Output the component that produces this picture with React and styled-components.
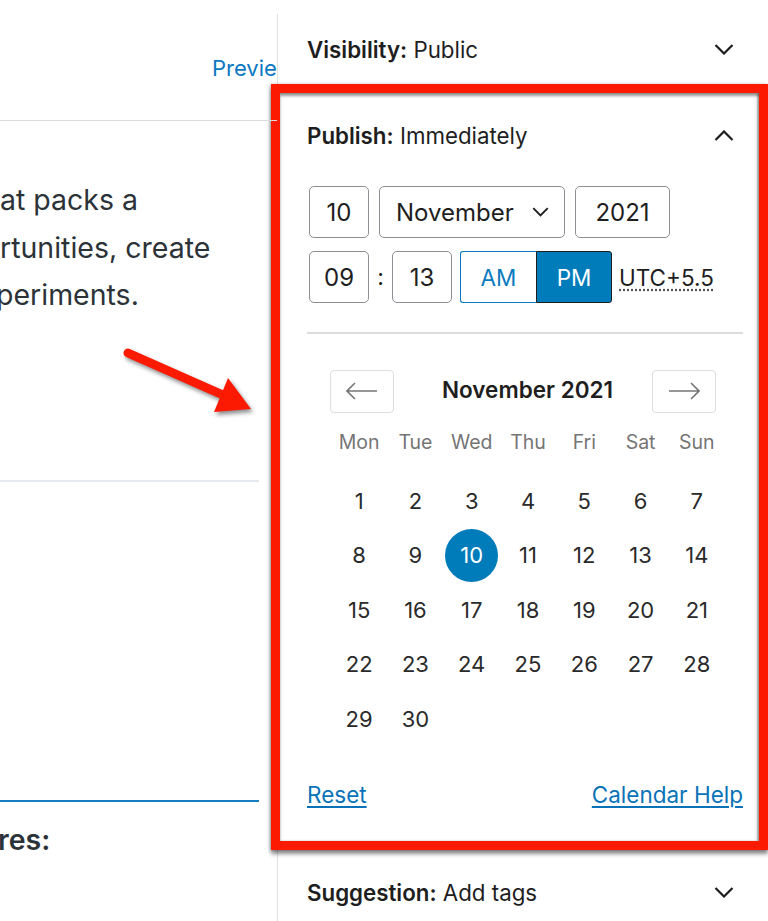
import React from "react";
import styled, { createGlobalStyle } from "styled-components";

const GlobalStyle = createGlobalStyle`
  html, body {
    margin: 0;
    padding: 0;
    background: #ffffff;
    overflow: hidden;
  }
  body {
    font-family: Inter, "Noto Sans", sans-serif;
    color: #1e1e1e;
  }
  * { box-sizing: border-box; }
`;

const Page = styled.div`
  display: flex;
  width: 768px;
  height: 921px;
  overflow: hidden;
`;

const Main = styled.div`
  position: relative;
  width: 277px;
  flex: none;
  overflow: hidden;
`;

const MainHeader = styled.div`
  height: 121px;
  border-bottom: 1px solid #dcdcde;
  padding: 55px 0 0 212px;
`;

const PreviewLink = styled.span`
  display: block;
  white-space: nowrap;
  font-size: 22px;
  line-height: 26px;
  color: #0b78c3;
`;

const Body = styled.div`
  padding-right: 18px;
`;

const Para = styled.div`
  margin-top: 55px;
  font-size: 28.5px;
  line-height: 47.5px;
  color: #2c3338;
  white-space: nowrap;
`;

const Line = styled.div`
  margin-left: ${(p) => p.$shift || 0}px;
`;

const Rule = styled.div`
  height: 2px;
  margin-top: ${(p) => p.$gap}px;
  background: ${(p) => (p.$tone === "blue" ? "#1a7dc2" : "#e6eaee")};
`;

const Heading = styled.div`
  margin-top: 18px;
  font-size: 28.5px;
  line-height: 40px;
  font-weight: 600;
  color: #2c3338;
  white-space: nowrap;
  margin-left: -2px;
`;

const ArrowSvg = styled.svg`
  position: absolute;
  left: 120px;
  top: 340px;
  filter: drop-shadow(2px 3px 2px rgba(0, 0, 0, 0.45));
`;

const Sidebar = styled.div`
  flex: 1;
  margin-top: 14px;
  border-left: 1px solid #e0e0e0;
  display: flex;
  flex-direction: column;
`;

const PanelRow = styled.div`
  height: ${(p) => p.$h}px;
  flex: none;
  display: flex;
  align-items: center;
  justify-content: space-between;
  padding: 0 34px 0 29px;
  font-size: 22.3px;
`;

const Label = styled.span`
  font-weight: 600;
`;

const PublishPanel = styled.div`
  flex: none;
  margin-left: -7px;
  border: 9px solid #fd1a02;
  background: #ffffff;
  padding: 0 16px 32px 27px;
  box-shadow: 0 4px 4px rgba(0, 0, 0, 0.45), -1px 0 3px rgba(0, 0, 0, 0.25),
    inset 0 3px 3px rgba(0, 0, 0, 0.4), inset -2px 0 2px rgba(0, 0, 0, 0.3);
`;

const PanelHead = styled.div`
  height: 84px;
  display: flex;
  align-items: center;
  justify-content: space-between;
  padding-right: 9px;
  font-size: 22.3px;
`;

const FieldRow = styled.div`
  display: flex;
  align-items: center;
  gap: ${(p) => p.$gap}px;
  margin: ${(p) => p.$top}px 0 0 2px;
`;

const Field = styled.div`
  width: ${(p) => p.$w}px;
  height: 52px;
  border: 1.5px solid #8c8f94;
  border-radius: 5px;
  display: flex;
  align-items: center;
  justify-content: ${(p) => (p.$select ? "space-between" : "center")};
  padding: ${(p) => (p.$select ? "0 15px 0 16px" : "0")};
  font-size: 24px;
  color: #1e1e1e;
`;

const Colon = styled.span`
  width: 23px;
  text-align: center;
  font-size: 23px;
`;

const Toggle = styled.div`
  display: flex;
  height: 52px;
  margin: 0 7px 0 8px;
`;

const ToggleBtn = styled.div`
  width: 76px;
  display: flex;
  align-items: center;
  justify-content: center;
  font-size: 22.5px;
  border: 1.5px solid ${(p) => (p.$on ? "#1e1e1e" : "#0a7ac0")};
  border-right-width: ${(p) => (p.$on ? 1.5 : 0)}px;
  border-radius: ${(p) => (p.$on ? "0 3px 3px 0" : "3px 0 0 3px")};
  background: ${(p) => (p.$on ? "#007cba" : "#ffffff")};
  color: ${(p) => (p.$on ? "#ffffff" : "#0a7ac0")};
`;

const Tz = styled.span`
  font-size: 22.5px;
  color: #1e1e1e;
  text-decoration: underline dotted #555;
  text-underline-offset: 4px;
`;

const Divider = styled.div`
  height: 1.5px;
  margin-top: 29px;
  background: #dcdcde;
`;

const Nav = styled.div`
  margin: 36px 27px 0 23px;
  height: 43px;
  display: grid;
  grid-template-columns: 64px 1fr 64px;
  align-items: center;
`;

const NavBtn = styled.div`
  height: 43px;
  border: 1px solid #dedede;
  border-radius: 4px;
  display: flex;
  align-items: center;
  justify-content: center;
`;

const MonthTitle = styled.div`
  text-align: center;
  font-size: 22.5px;
  font-weight: 600;
  padding: 0 0 3px 9px;
  color: #1e1e1e;
`;

const Grid = styled.div`
  margin: ${(p) => p.$top}px 0 0 24px;
  width: 394px;
  display: grid;
  grid-template-columns: repeat(7, 1fr);
  grid-auto-rows: ${(p) => p.$row}px;
`;

const Weekday = styled.div`
  display: flex;
  align-items: center;
  justify-content: center;
  font-size: 19.5px;
  color: #757575;
`;

const Day = styled.div`
  display: flex;
  align-items: center;
  justify-content: center;
  font-size: 22px;
  color: #2a2a2a;
`;

const DayNum = styled.span`
  width: 53px;
  height: 53px;
  border-radius: 50%;
  display: flex;
  align-items: center;
  justify-content: center;
  background: ${(p) => (p.$sel ? "#007cba" : "transparent")};
  color: ${(p) => (p.$sel ? "#ffffff" : "inherit")};
`;

const Footer = styled.div`
  margin-top: 33px;
  height: 30px;
  display: flex;
  align-items: center;
  justify-content: space-between;
`;

const Link = styled.span`
  font-size: 22.5px;
  color: #0a73b8;
  text-decoration: underline;
  text-underline-offset: 3px;
`;

const Chevron = ({ up, w = 20, h = 11 }) => (
  <svg width={w} height={h} viewBox="0 0 20 11" fill="none">
    <path
      d={up ? "M1.5 10 L10 1.5 L18.5 10" : "M1.5 1 L10 9.5 L18.5 1"}
      stroke="#1e1e1e"
      strokeWidth="2.2"
    />
  </svg>
);

const NavArrow = ({ right }) => (
  <svg width="32" height="18" viewBox="0 0 32 18" fill="none">
    <path
      d={right ? "M1 9 H31 M23 1 L31 9 L23 17" : "M31 9 H1 M9 1 L1 9 L9 17"}
      stroke="#757575"
      strokeWidth="1.6"
    />
  </svg>
);

const weekdays = ["Mon", "Tue", "Wed", "Thu", "Fri", "Sat", "Sun"];
const days = Array.from({ length: 30 }, (_, i) => i + 1);

export default function App() {
  return (
    <>
      <GlobalStyle />
      <Page>
        <Main>
          <MainHeader>
            <PreviewLink>Preview</PreviewLink>
          </MainHeader>
          <Body>
            <Para>
              <Line>at packs a</Line>
              <Line>rtunities, create</Line>
              <Line $shift={-4}>periments.</Line>
            </Para>
            <Rule $gap={161} />
            <Rule $gap={318} $tone="blue" />
            <Heading>res:</Heading>
          </Body>
          <ArrowSvg width="145" height="85" viewBox="0 0 145 85">
            <line
              x1="8"
              y1="13"
              x2="112"
              y2="59"
              stroke="#fd1a02"
              strokeWidth="9"
              strokeLinecap="round"
            />
            <polygon points="108,38 131,69 94,72" fill="#fd1a02" />
          </ArrowSvg>
        </Main>
        <Sidebar>
          <PanelRow $h={70}>
            <span>
              <Label>Visibility:</Label> Public
            </span>
            <Chevron />
          </PanelRow>
          <PublishPanel>
            <PanelHead>
              <span>
                <Label>Publish:</Label> Immediately
              </span>
              <Chevron up />
            </PanelHead>
            <FieldRow $top={9} $gap={10}>
              <Field $w={60}>10</Field>
              <Field $w={186} $select>
                <span>November</span>
                <Chevron w={17} h={10} />
              </Field>
              <Field $w={95}>2021</Field>
            </FieldRow>
            <FieldRow $top={13} $gap={0}>
              <Field $w={60}>09</Field>
              <Colon>:</Colon>
              <Field $w={60}>13</Field>
              <Toggle>
                <ToggleBtn>AM</ToggleBtn>
                <ToggleBtn $on>PM</ToggleBtn>
              </Toggle>
              <Tz>UTC+5.5</Tz>
            </FieldRow>
            <Divider />
            <Nav>
              <NavBtn>
                <NavArrow />
              </NavBtn>
              <MonthTitle>November 2021</MonthTitle>
              <NavBtn>
                <NavArrow right />
              </NavBtn>
            </Nav>
            <Grid $top={14} $row={30}>
              {weekdays.map((d) => (
                <Weekday key={d}>{d}</Weekday>
              ))}
            </Grid>
            <Grid $top={17} $row={54.5}>
              {days.map((d) => (
                <Day key={d}>
                  <DayNum $sel={d === 10}>{d}</DayNum>
                </Day>
              ))}
            </Grid>
            <Footer>
              <Link>Reset</Link>
              <Link>Calendar Help</Link>
            </Footer>
          </PublishPanel>
          <PanelRow $h={84}>
            <span>
              <Label>Suggestion:</Label> Add tags
            </span>
            <Chevron />
          </PanelRow>
        </Sidebar>
      </Page>
    </>
  );
}
